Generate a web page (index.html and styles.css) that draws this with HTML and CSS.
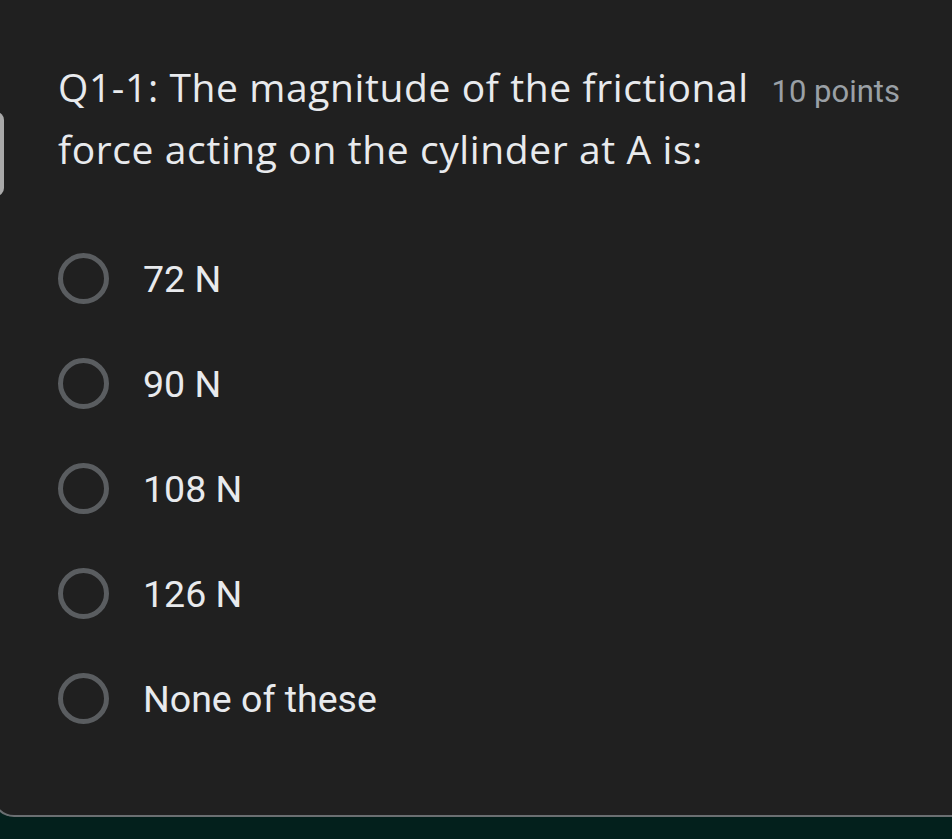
FILE: index.html
```html
<!DOCTYPE html>
<html>
<head>
<meta charset="utf-8">
<link rel="stylesheet" href="styles.css">
</head>
<body>
<div class="card">
  <div class="head">
    <div class="title">Q1-1: The magnitude of the frictional force acting on the cylinder at A is:</div>
    <div class="points">10 points</div>
  </div>
  <div class="options">
    <div class="opt"><span class="radio"></span><span class="label">72 N</span></div>
    <div class="opt"><span class="radio"></span><span class="label">90 N</span></div>
    <div class="opt"><span class="radio"></span><span class="label">108 N</span></div>
    <div class="opt"><span class="radio"></span><span class="label">126 N</span></div>
    <div class="opt"><span class="radio"></span><span class="label">None of these</span></div>
  </div>
</div>
</body>
</html>
```
FILE: styles.css
```css
html, body {
  margin: 0;
  padding: 0;
}
body {
  background: #03201c;
  width: 952px;
  height: 839px;
  overflow: hidden;
}
.card {
  position: relative;
  box-sizing: border-box;
  height: 817px;
  width: 980px;
  margin-left: -8px;
  background: #202020;
  border-bottom: 2px solid #6b6f72;
  border-left: 2px solid #6b6f72;
  border-radius: 0 0 0 22px;
  padding: 56px 0 0 64px;
}
.card::before {
  content: "";
  position: absolute;
  left: -2px;
  top: 112px;
  width: 12px;
  height: 84px;
  background: #a9a9a9;
  border-radius: 0 8px 8px 0;
}
.head {
  display: flex;
  align-items: baseline;
  width: 842px;
}
.title {
  flex: 1;
  font-family: "Open Sans", sans-serif;
  font-size: 39px;
  letter-spacing: 0.6px;
  line-height: 62px;
  color: #e8eaed;
  padding-right: 20px;
}
.points {
  flex: none;
  font-family: Roboto, sans-serif;
  font-size: 31px;
  color: #9aa0a6;
}
.options {
  margin-top: 73px;
  display: flex;
  flex-direction: column;
  gap: 54px;
}
.opt {
  display: flex;
  align-items: center;
  height: 51px;
}
.radio {
  box-sizing: border-box;
  width: 51px;
  height: 51px;
  border: 5px solid #5a5d60;
  border-radius: 50%;
  margin-right: 34px;
}
.label {
  font-family: Roboto, sans-serif;
  font-size: 37.5px;
  color: #e8eaed;
}
```
